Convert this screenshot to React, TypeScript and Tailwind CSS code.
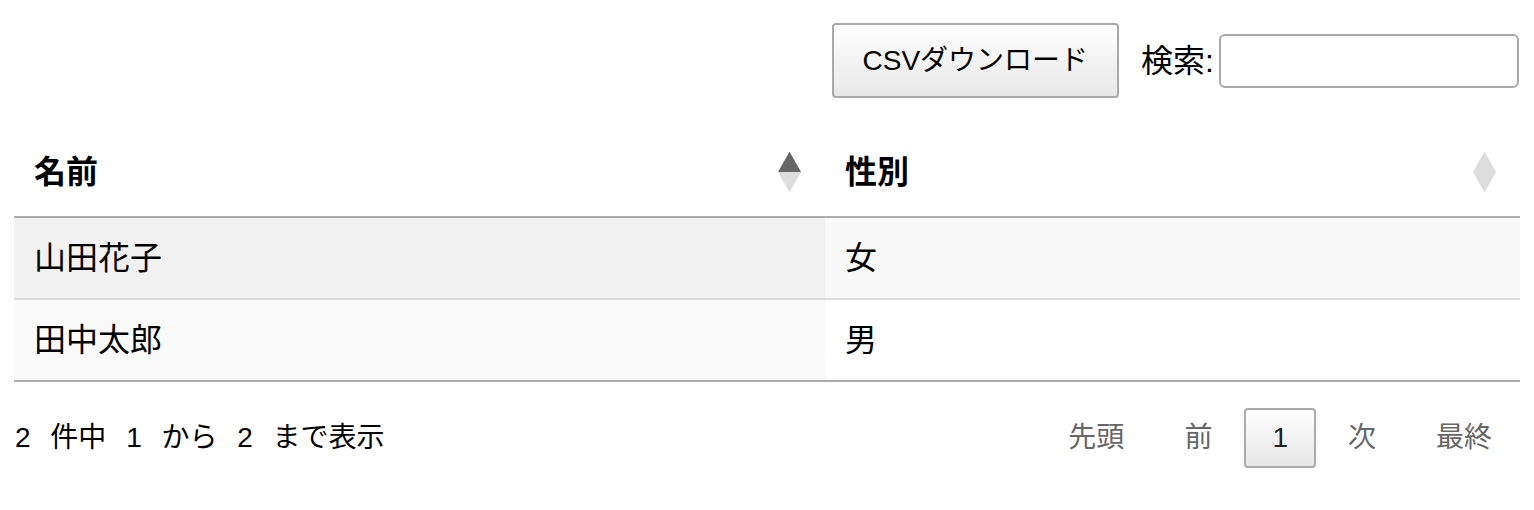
import React from "react";

function SortIcon({ active }: { active: boolean }) {
  return (
    <svg width="23" height="41" viewBox="0 0 23 41" className="absolute right-[24px] top-1/2 -translate-y-1/2">
      <polygon points="11.5,0 23,20.5 0,20.5" fill={active ? "#666666" : "#dddddd"} />
      <polygon points="0,20.5 23,20.5 11.5,41" fill="#dddddd" />
    </svg>
  );
}

const rows = [
  { name: "山田花子", sex: "女" },
  { name: "田中太郎", sex: "男" },
];

export default function App() {
  return (
    <div className="px-[14px] pt-[23px] pb-[40px] bg-white text-black font-['Liberation_Sans','Noto_Sans_CJK_JP',sans-serif]">
      <div className="flex justify-end items-center mr-px">
        <button className="h-[75px] px-[29px] border-2 border-[#a9a9a9] rounded-[4px] bg-linear-to-b from-white to-[#e8e8e8] text-[28px] text-black">
          CSVダウンロード
        </button>
        <label className="ml-[22px] flex items-center text-[32px]">
          検索:
          <input type="text" className="ml-[5px] w-[300px] h-[54px] border-2 border-[#aaaaaa] rounded-[6px] bg-white outline-none" />
        </label>
      </div>

      <table className="mt-[30px] w-full border-collapse table-fixed">
        <colgroup>
          <col className="w-[811px]" />
          <col />
        </colgroup>
        <thead>
          <tr>
            <th className="relative text-left font-bold text-[32px] leading-[48px] py-[20px] pl-[20px] pr-[60px] border-b-2 border-[#acacac]">
              名前
              <SortIcon active={true} />
            </th>
            <th className="relative text-left font-bold text-[32px] leading-[48px] py-[20px] pl-[20px] pr-[60px] border-b-2 border-[#acacac]">
              性別
              <SortIcon active={false} />
            </th>
          </tr>
        </thead>
        <tbody>
          {rows.map((r, i) => {
            const last = i === rows.length - 1;
            const odd = i % 2 === 0;
            const border = last ? "border-[#acacac]" : "border-[#dddddd]";
            return (
              <tr key={r.name}>
                <td className={`text-[32px] leading-[48px] py-[16px] px-[20px] border-b-2 ${border} ${odd ? "bg-[#f1f1f1]" : "bg-[#fafafa]"}`}>
                  {r.name}
                </td>
                <td className={`text-[32px] leading-[48px] py-[16px] px-[20px] border-b-2 ${border} ${odd ? "bg-[#f9f9f9]" : "bg-white"}`}>
                  {r.sex}
                </td>
              </tr>
            );
          })}
        </tbody>
      </table>

      <div className="mt-[26px] flex justify-between items-center">
        <div className="text-[28px] [word-spacing:12px] pl-px">2 件中 1 から 2 まで表示</div>
        <div className="flex items-center text-[28px] text-[#666666]">
          <span className="h-[60px] px-[26px] ml-[4px] border-2 border-transparent flex items-center">先頭</span>
          <span className="h-[60px] px-[26px] ml-[4px] border-2 border-transparent flex items-center">前</span>
          <span className="h-[60px] px-[26px] ml-[4px] border-2 border-[#aaaaaa] rounded-[4px] bg-linear-to-b from-white to-[#e6e6e6] text-[#222222] flex items-center">1</span>
          <span className="h-[60px] px-[26px] ml-[4px] border-2 border-transparent flex items-center">次</span>
          <span className="h-[60px] px-[26px] ml-[4px] border-2 border-transparent flex items-center">最終</span>
        </div>
      </div>
    </div>
  );
}
